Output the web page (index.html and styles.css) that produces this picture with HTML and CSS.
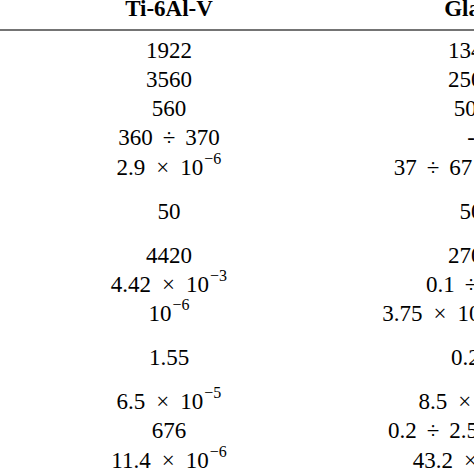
FILE: index.html
```html
<!DOCTYPE html>
<html>
<head>
<meta charset="utf-8">
<link rel="stylesheet" href="styles.css">
</head>
<body>
<div class="table">
  <div class="row head">
    <div class="cell">Ti-6Al-V</div>
    <div class="cell">Glass</div>
  </div>
  <div class="body">
    <div class="row"><div class="cell">1922</div><div class="cell">1340</div></div>
    <div class="row"><div class="cell">3560</div><div class="cell">2500</div></div>
    <div class="row"><div class="cell">560</div><div class="cell">500</div></div>
    <div class="row"><div class="cell">360<span class="op">÷</span>370</div><div class="cell">-</div></div>
    <div class="row"><div class="cell">2.9<span class="op x">×</span>10<span class="sup">−6</span></div><div class="cell">37<span class="op">÷</span>67<span class="op x">×</span>10<span class="sup">−6</span></div></div>
    <div class="row tall"><div class="cell">50</div><div class="cell">50</div></div>
    <div class="row"><div class="cell">4420</div><div class="cell">2700</div></div>
    <div class="row"><div class="cell">4.42<span class="op x">×</span>10<span class="sup">−3</span></div><div class="cell">0.1<span class="op">÷</span>0.5</div></div>
    <div class="row"><div class="cell">10<span class="sup">−6</span></div><div class="cell">3.75<span class="op x">×</span>10<span class="sup">−6</span><span class="op">÷</span>0.1</div></div>
    <div class="row tall"><div class="cell">1.55</div><div class="cell">0.22</div></div>
    <div class="row"><div class="cell">6.5<span class="op x">×</span>10<span class="sup">−5</span></div><div class="cell">8.5<span class="op x">×</span>10<span class="sup">−6</span></div></div>
    <div class="row"><div class="cell">676</div><div class="cell">0.2<span class="op">÷</span>2.5<span class="op x">×</span>10<span class="sup">−3</span></div></div>
    <div class="row"><div class="cell">11.4<span class="op x">×</span>10<span class="sup">−6</span></div><div class="cell">43.2<span class="op x">×</span>10<span class="sup">−6</span></div></div>
  </div>
</div>
</body>
</html>
```
FILE: styles.css
```css
html, body {
  margin: 0;
  padding: 0;
  background: #ffffff;
  overflow: hidden;
}
body {
  width: 474px;
  height: 474px;
  font-family: "Liberation Serif", "Times New Roman", serif;
  font-size: 23px;
  color: #000000;
}
.table {
  width: 604px;
}
.row {
  display: grid;
  grid-template-columns: 338px 266px;
  height: 29.3px;
}
.row.tall {
  height: 58.6px;
}
.cell {
  display: flex;
  align-items: center;
  justify-content: center;
  white-space: nowrap;
  line-height: 29.3px;
}
.head {
  height: auto;
  border-bottom: 2px solid #747474;
  padding-bottom: 11px;
}
.head .cell {
  font-weight: bold;
  line-height: 18px;
}
.body {
  padding-top: 4.6px;
}
.op {
  margin: 0 10px;
}
.op.x {
  margin: 0 11px;
}
.sup {
  font-size: 16px;
  line-height: 1;
  position: relative;
  top: -8.5px;
  margin-left: 1px;
}
```
